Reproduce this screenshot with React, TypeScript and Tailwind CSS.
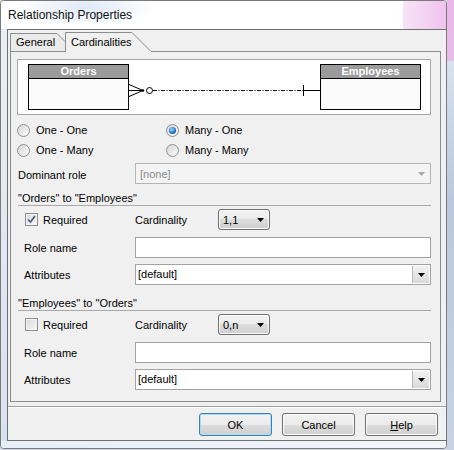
import React from "react";
import clsx from "clsx";

function Arrow({ color = "#000" }: { color?: string }) {
  return (
    <svg width="7" height="4" viewBox="0 0 7 4" className="shrink-0">
      <path d="M0 0H7L3.5 4Z" fill={color} />
    </svg>
  );
}

function Radio({ checked }: { checked?: boolean }) {
  return (
    <span className="w-[13px] h-[13px] shrink-0 rounded-full border border-[#8f8f8f] bg-linear-to-br from-[#d4d4d4] to-[#fcfcfc] flex items-center justify-center">
      {checked && (
        <span className="w-[7px] h-[7px] rounded-full bg-[radial-gradient(circle_at_40%_35%,#9ad8ff,#1f6cbc_60%,#0c3b74)]" />
      )}
    </span>
  );
}

function Checkbox({ checked }: { checked?: boolean }) {
  return (
    <span className="w-[13px] h-[13px] shrink-0 border border-[#8f8f8f] bg-linear-to-br from-[#d8d8d8] to-[#fafafa] shadow-[inset_0_0_0_1px_#f4f4f4] flex items-center justify-center">
      {checked && (
        <svg width="11" height="11" viewBox="0 0 11 11">
          <path d="M2 5.5L4.5 8L9 2" fill="none" stroke="#4b5b8a" strokeWidth="1.7" />
        </svg>
      )}
    </span>
  );
}

function DropList({ value }: { value: string }) {
  return (
    <div className="w-[52px] h-[21px] rounded-[3px] border border-[#707070] bg-[linear-gradient(#f2f2f2,#ebebeb_50%,#dddddd_50%,#cfcfcf)] shadow-[inset_0_0_0_1px_#fbfbfb] flex items-center pl-[4px] pr-[5px]">
      <span className="flex-1 leading-[14px]">{value}</span>
      <Arrow />
    </div>
  );
}

function TextBox() {
  return <div className="w-[296px] h-[21px] border border-[#a3a3a3] bg-white" />;
}

function EditCombo({ value }: { value: string }) {
  return (
    <div className="w-[296px] h-[21px] border border-[#a3a3a3] bg-white flex">
      <span className="flex-1 pl-[2px] leading-[19px]">{value}</span>
      <div className="w-[17px] m-[1px] ml-0 border-l border-[#b8b8b8] bg-linear-to-b from-[#f3f3f3] to-[#d9d9d9] flex items-center justify-center">
        <Arrow />
      </div>
    </div>
  );
}

function Button({ children, primary }: { children: React.ReactNode; primary?: boolean }) {
  return (
    <div
      className={clsx(
        "w-[73px] h-[23px] rounded-[3px] border bg-[linear-gradient(#f2f2f2,#ebebeb_50%,#dddddd_50%,#cfcfcf)] flex items-center justify-center leading-[14px]",
        primary
          ? "border-[#3c7fb1] shadow-[inset_0_0_0_1px_#a6def9]"
          : "border-[#707070] shadow-[inset_0_0_0_1px_#fbfbfb]"
      )}
    >
      {children}
    </div>
  );
}

function EntityBox({ name }: { name: string }) {
  return (
    <div className="w-[101px] h-[46px] border border-black bg-[#fbfbfb] flex flex-col">
      <div className="h-[14px] bg-[#9b9b9b] border-b border-black text-white font-bold text-center leading-[13px]">
        {name}
      </div>
    </div>
  );
}

function Relation() {
  return (
    <div className="flex items-start pt-[4px] pl-[10px]">
      <EntityBox name="Orders" />
      <svg width="191" height="46" viewBox="0 0 191 46" shapeRendering="geometricPrecision">
        <path d="M0 20.5L14 26.5M0 26.5H14M0 32.5L14 26.5" stroke="#000" strokeWidth="1" fill="none" />
        <circle cx="14" cy="26.5" r="1.3" fill="#000" />
        <circle cx="20.5" cy="26.5" r="3" fill="#fff" stroke="#000" />
        <line x1="24" y1="26.5" x2="174" y2="26.5" stroke="#000" strokeDasharray="4 1.5 1 1.5" />
        <line x1="174.5" y1="21" x2="174.5" y2="32" stroke="#000" />
        <line x1="174" y1="26.5" x2="191" y2="26.5" stroke="#000" />
      </svg>
      <EntityBox name="Employees" />
    </div>
  );
}

function Tabs() {
  return (
    <div className="flex h-[21px] pl-[2px] relative z-10">
      <div className="relative w-[66px] h-[18px] mt-[3px] pl-[6px]">
        <svg className="absolute inset-0" width="66" height="18" viewBox="0 0 66 18">
          <path d="M0.5 18V0.5H47L64.5 18" fill="#ebebeb" stroke="#8c8c8c" />
        </svg>
        <span className="relative leading-[18px]">General</span>
      </div>
      <div className="relative -ml-[11px] w-[86px] h-[20px] mt-[2px] pl-[6px]">
        <svg className="absolute inset-0" width="86" height="20" viewBox="0 0 86 20">
          <path d="M0.5 20V0.5H67L86 19.5V20Z" fill="#f0f0f0" />
          <path d="M0.5 20V0.5H67L85.5 19" fill="none" stroke="#8c8c8c" />
        </svg>
        <span className="relative leading-[20px]">Cardinalities</span>
      </div>
    </div>
  );
}

function Section({ title, required, card }: { title: string; required?: boolean; card: string }) {
  return (
    <>
      <div className="ml-[7px] w-[413px] h-[14px] leading-[14px]">{title}</div>
      <div className="ml-[7px] w-[413px] border-t border-[#a9a9a9]" />
      <div className="flex items-center h-[21px] mt-[3px] ml-[14px]">
        <div className="w-[110px] flex items-center gap-[5px]">
          <Checkbox checked={required} />
          <span className="leading-[14px]">Required</span>
        </div>
        <span className="w-[83px] leading-[14px]">Cardinality</span>
        <DropList value={card} />
      </div>
      <div className="flex items-center h-[21px] mt-[7px] ml-[13px]">
        <span className="w-[111px] leading-[14px]">Role name</span>
        <TextBox />
      </div>
      <div className="flex items-center h-[21px] mt-[6px] ml-[13px]">
        <span className="w-[111px] leading-[14px]">Attributes</span>
        <EditCombo value="[default]" />
      </div>
    </>
  );
}

export default function App() {
  return (
    <div className="w-[454px] h-[450px] flex bg-[#cdd8e6] font-['Liberation_Sans',Arial,sans-serif] text-[11px] text-black overflow-hidden">
      <div className="w-[447px] h-[449px] border border-[#7a7a7a] rounded-[4px] bg-[#eef3f9] flex flex-col overflow-hidden">
        {/* title bar */}
        <div className="h-[28px] flex items-center bg-[radial-gradient(ellipse_70px_20px_at_85px_6px,#dfeaf7,#ffffff)]">
          <span className="pl-[7px] text-[12px] leading-[16px] text-[#111]">Relationship Properties</span>
          <div className="flex-1" />
          <div className="w-[43px] h-full bg-linear-to-r from-[#f7e3f6] to-[#efc3ee]" />
        </div>

        <div className="flex h-[412px]">
          <div className="w-[6px] bg-linear-to-b from-[#e9eff7] to-[#d7e2ef]" />
          {/* client area */}
          <div className="w-[439px] border-l border-t border-b border-[#6f6f6f] bg-[#f0f0f0] flex flex-col">
            <Tabs />
            <div className="ml-[2px] w-[431px] h-[351px] border border-[#8c8c8c] bg-[#f0f0f0] flex flex-col">
              <div className="ml-[6px] mt-[7px] w-[414px] h-[56px] border border-[#a5a5a5] bg-white">
                <Relation />
              </div>

              <div className="mt-[5px] ml-[6px] flex flex-col">
                <div className="flex h-[20px] items-center">
                  <div className="w-[149px] flex items-center gap-[6px]">
                    <Radio />
                    <span className="leading-[14px]">One - One</span>
                  </div>
                  <div className="flex items-center gap-[6px]">
                    <Radio checked />
                    <span className="leading-[14px]">Many - One</span>
                  </div>
                </div>
                <div className="flex h-[20px] items-center">
                  <div className="w-[149px] flex items-center gap-[6px]">
                    <Radio />
                    <span className="leading-[14px]">One - Many</span>
                  </div>
                  <div className="flex items-center gap-[6px]">
                    <Radio />
                    <span className="leading-[14px]">Many - Many</span>
                  </div>
                </div>
              </div>

              <div className="flex items-center h-[21px] mt-[3px] ml-[7px]">
                <span className="w-[117px] leading-[14px] pt-[3px]">Dominant role</span>
                <div className="w-[296px] h-[21px] border border-[#b5b5b5] bg-[#f4f4f4] flex items-center pl-[4px] pr-[5px]">
                  <span className="flex-1 text-[#8a8a8a] leading-[14px]">[none]</span>
                  <Arrow color="#a6a6a6" />
                </div>
              </div>

              <div className="mt-[7px]" />
              <Section title={'"Orders" to "Employees"'} required card="1,1" />
              <div className="mt-[11px]" />
              <Section title={'"Employees" to "Orders"'} card="0,n" />
            </div>

            <div className="mt-[4px] border-t border-b border-t-[#a0a0a0] border-b-white" />
            <div className="mt-[5px] flex justify-end gap-[10px] pr-[8px]">
              <Button primary>OK</Button>
              <Button>Cancel</Button>
              <Button>
                <span>
                  <span className="underline">H</span>elp
                </span>
              </Button>
            </div>
          </div>
        </div>
        <div className="h-[7px] bg-linear-to-r from-[#e8eef6] to-[#f3f6fb]" />
      </div>
      <div className="w-[7px] h-[450px] bg-[linear-gradient(#eab8e9,#e7bde8_60px,#d7e2ef_62px,#b9c8dc_200px,#c7d3e3)]" />
    </div>
  );
}
